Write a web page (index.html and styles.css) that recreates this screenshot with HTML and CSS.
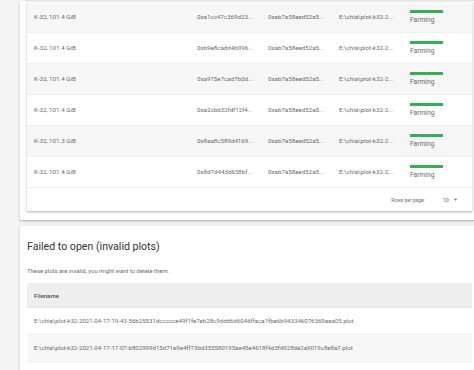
FILE: index.html
```html
<!DOCTYPE html>
<html lang="en">
<head>
<meta charset="UTF-8">
<meta name="viewport" content="width=device-width, initial-scale=1.0">
<title>Plots</title>
<link rel="stylesheet" href="styles.css">
</head>
<body>

<div class="page">
    <div class="card card-plots">
        <div class="paper">
            <div class="plot-table">
                <div class="plot-row">
                    <div class="cell">K-32, 101.4 GiB</div>
                    <div class="cell">0xa1cc47c369d23...</div>
                    <div class="cell">0xab7a58eed52a5...</div>
                    <div class="cell">E:\chia\plot-k32-2...</div>
                    <div class="cell status"><span class="bar"></span><span>Farming</span></div>
                </div>
                <div class="plot-row">
                    <div class="cell">K-32, 101.4 GiB</div>
                    <div class="cell">0xb9e8cadd4b096...</div>
                    <div class="cell">0xab7a58eed52a5...</div>
                    <div class="cell">E:\chia\plot-k32-2...</div>
                    <div class="cell status"><span class="bar"></span><span>Farming</span></div>
                </div>
                <div class="plot-row">
                    <div class="cell">K-32, 101.4 GiB</div>
                    <div class="cell">0xa915e7cad7b0d...</div>
                    <div class="cell">0xab7a58eed52a5...</div>
                    <div class="cell">E:\chia\plot-k32-2...</div>
                    <div class="cell status"><span class="bar"></span><span>Farming</span></div>
                </div>
                <div class="plot-row">
                    <div class="cell">K-32, 101.4 GiB</div>
                    <div class="cell">0xa2cbd32fdf12f4...</div>
                    <div class="cell">0xab7a58eed52a5...</div>
                    <div class="cell">E:\chia\plot-k32-2...</div>
                    <div class="cell status"><span class="bar"></span><span>Farming</span></div>
                </div>
                <div class="plot-row">
                    <div class="cell">K-32, 101.3 GiB</div>
                    <div class="cell">0x8aa8c589d4169...</div>
                    <div class="cell">0xab7a58eed52a5...</div>
                    <div class="cell">E:\chia\plot-k32-2...</div>
                    <div class="cell status"><span class="bar"></span><span>Farming</span></div>
                </div>
                <div class="plot-row">
                    <div class="cell">K-32, 101.4 GiB</div>
                    <div class="cell">0x8d7d443d658bf...</div>
                    <div class="cell">0xab7a58eed52a5...</div>
                    <div class="cell">E:\chia\plot-k32-2...</div>
                    <div class="cell status"><span class="bar"></span><span>Farming</span></div>
                </div>
            </div>
            <div class="pager">
                <span class="pager-label">Rows per page:</span>
                <span class="pager-select">10
                    <svg viewBox="0 0 24 24" width="9" height="9"><path d="M7 10l5 5 5-5z" fill="#777"/></svg>
                </span>
            </div>
        </div>
    </div>

    <div class="card card-invalid">
        <h2 class="title">Failed to open (invalid plots)</h2>
        <p class="subtitle">These plots are invalid, you might want to delete them.</p>
        <div class="invalid-table">
            <div class="invalid-head">Filename</div>
            <div class="invalid-row">E:\chia\plot-k32-2021-04-17-19-43-56b25531dccccce49f1fe7eb28c9ddd6d6046ffaca1fbe6b943346076369aaa05.plot</div>
            <div class="invalid-row">E:\chia\plot-k32-2021-04-17-17-07-b802999d15d71e9e4ff73bd355580195ae45e4618f4d3fd928de2a9019c8e8a7.plot</div>
            <div class="invalid-row">&nbsp;</div>
        </div>
    </div>
</div>

</body>
</html>
```

FILE: styles.css
```css
body {
    margin: 0;
    background-color: #f3f3f3;
    font-family: Roboto, "Liberation Sans", sans-serif;
    color: #6a6a6a;
    overflow: hidden;
}

.page {
    padding-left: 20px;
    margin-right: -5px;
}

.card {
    background-color: #fff;
    box-shadow: 0 1px 3px rgba(0, 0, 0, 0.18), 0 1px 1px rgba(0, 0, 0, 0.1);
}

.card-plots {
    margin-top: -12px;
    padding: 0 7px 9px;
}

.paper {
    background-color: #fff;
    box-shadow: 0 1px 3px rgba(0, 0, 0, 0.2), 0 1px 1px rgba(0, 0, 0, 0.12);
}

.plot-table {
    margin-top: 13px;
    border-top: 1px solid #eeeeee;
}

.plot-row {
    display: grid;
    grid-template-columns: 163px 71px 71px 71px 1fr;
    align-items: center;
    box-sizing: border-box;
    height: 31px;
    border-bottom: 1px solid #eeeeee;
    font-size: 6.2px;
}

.plot-row:nth-child(odd) {
    background-color: #f6f6f6;
}

.cell {
    padding-left: 7px;
    white-space: nowrap;
    overflow: hidden;
}

.status {
    display: flex;
    flex-direction: column;
    align-items: flex-start;
    gap: 3px;
    line-height: 9px;
    font-size: 6.7px;
}

.bar {
    display: block;
    width: 33px;
    height: 4px;
    background-color: #3aac59;
    margin-top: -1px;
}

.pager {
    display: flex;
    justify-content: flex-end;
    align-items: center;
    height: 23px;
    padding-right: 12px;
    font-size: 4.9px;
}

.pager-select {
    display: flex;
    align-items: center;
    margin-left: 18px;
    font-size: 5.6px;
    gap: 2px;
}

.card-invalid {
    margin-top: 6px;
    padding: 14px 7px 0;
}

.title {
    margin: 0;
    font-size: 10.6px;
    line-height: 14px;
    font-weight: 400;
    color: #333;
}

.subtitle {
    margin: 13px 0 0;
    font-size: 5.9px;
    line-height: 9px;
}

.invalid-table {
    margin-top: 7px;
    font-size: 6.1px;
}

.invalid-head {
    height: 25px;
    line-height: 25px;
    padding-left: 7px;
    background-color: #eeeeee;
    font-weight: 500;
    color: #555;
    border-bottom: 1px solid #e4e4e4;
    box-sizing: border-box;
}

.invalid-row {
    box-sizing: border-box;
    height: 27px;
    line-height: 26px;
    padding-left: 7px;
    border-bottom: 1px solid #eeeeee;
    white-space: nowrap;
}

.invalid-row:nth-child(odd) {
    background-color: #f6f6f6;
}
```
